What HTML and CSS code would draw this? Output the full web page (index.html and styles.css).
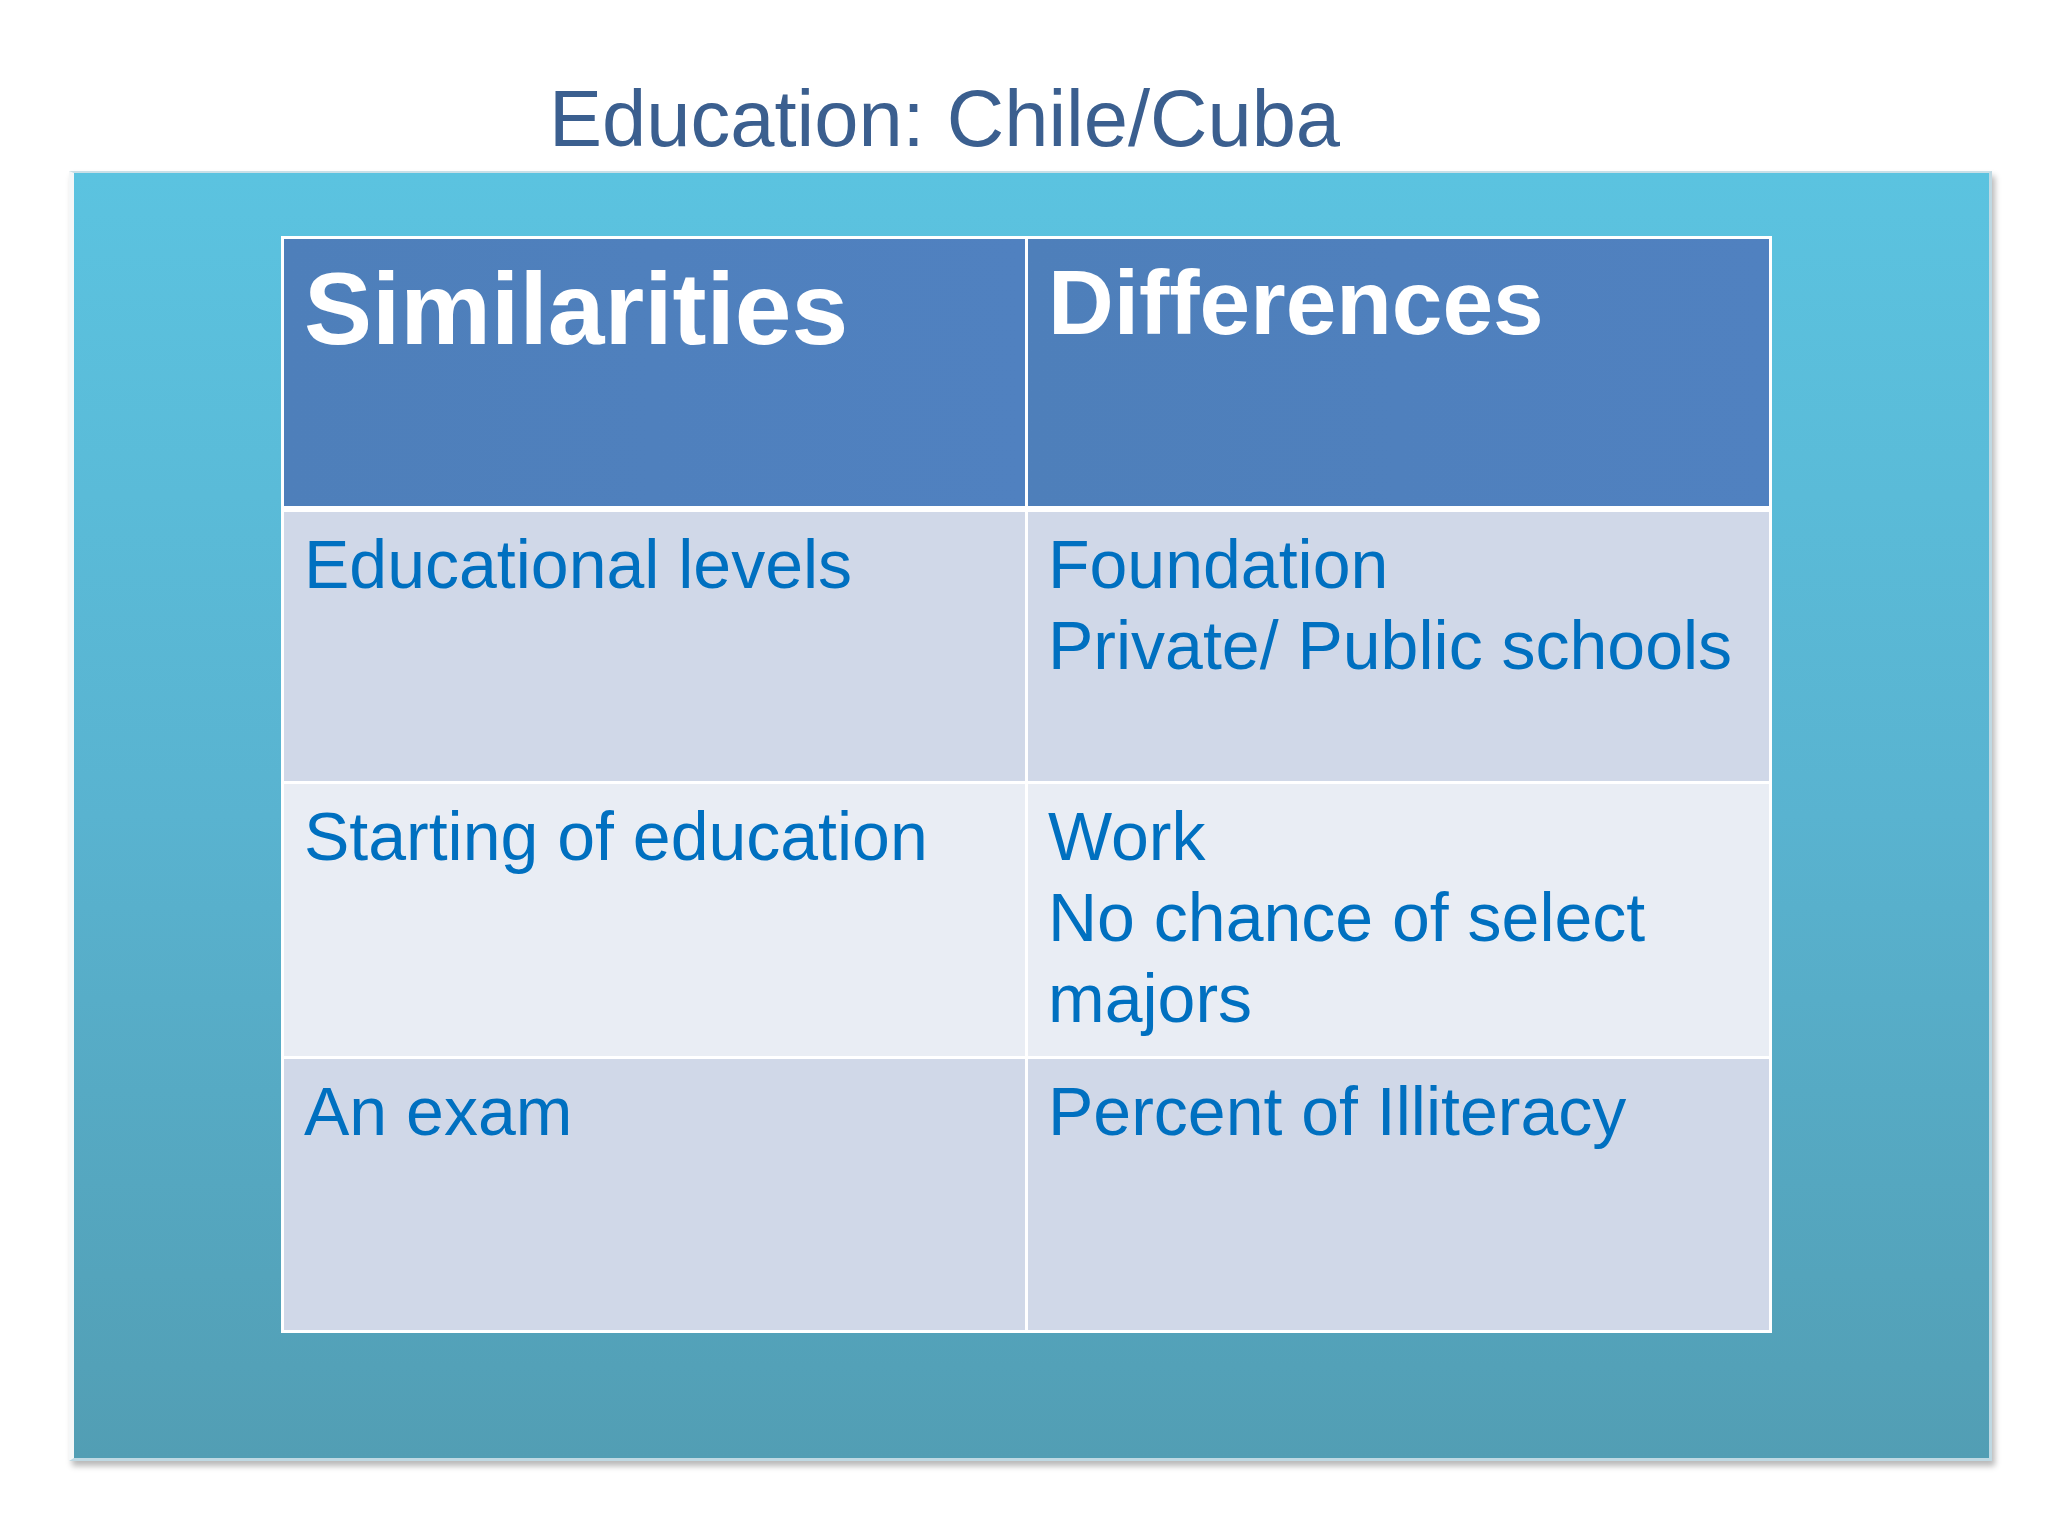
FILE: index.html
```html
<!DOCTYPE html>
<html>
<head>
<meta charset="utf-8">
<link rel="stylesheet" href="styles.css">
</head>
<body>
<div class="slide">
  <h1 class="title">Education: Chile/Cuba</h1>
  <div class="panel">
    <div class="grid">
      <div class="cell head"><span class="h-big">Similarities</span></div>
      <div class="cell head"><span class="h-mid">Differences</span></div>
      <div class="cell odd">Educational levels</div>
      <div class="cell odd">Foundation<br>Private/ Public schools</div>
      <div class="cell even">Starting of education</div>
      <div class="cell even">Work<br>No chance of select majors</div>
      <div class="cell odd">An exam</div>
      <div class="cell odd">Percent of Illiteracy</div>
    </div>
  </div>
</div>
</body>
</html>
```

FILE: styles.css
```css
html, body {
  margin: 0;
  padding: 0;
  background: #ffffff;
}
.slide {
  width: 2048px;
  height: 1536px;
  display: flex;
  flex-direction: column;
  font-family: "Liberation Sans", Arial, sans-serif;
}
.title {
  margin: 73px 0 0 549px;
  font-size: 79.5px;
  font-weight: normal;
  line-height: 92px;
  height: 92px;
  color: #3b5f8f;
  white-space: nowrap;
}
.panel {
  margin: 6px 0 0 69px;
  border-left: 5px solid #f5f7f8;
  border-top: 2px solid #c9dfe7;
  border-right: 3px solid #bfd9e3;
  border-bottom: 3px solid #bfd9e3;
  background: linear-gradient(to bottom, #5bc3e0 0%, #59b3d0 50%, #529eb4 100%);
  box-shadow: 3px 5px 6px rgba(0, 0, 0, 0.28);
  display: flex;
  align-items: flex-start;
  padding: 63px 0 0 207px;
  box-sizing: border-box;
  width: 1923px;
  height: 1290px;
}
.grid {
  display: grid;
  grid-template-columns: 741px 741px;
  grid-template-rows: 270px 269px 272px 271px;
  gap: 3px;
  padding: 3px;
  background: #ffffff;
}
.cell {
  box-sizing: border-box;
  padding: 12px 8px 0 20px;
  font-size: 68px;
  line-height: 81px;
  color: #0070c0;
  white-space: normal;
}
.head {
  background: linear-gradient(to right, #4e7fba, #5081c0);
  color: #ffffff;
  font-weight: bold;
  padding-top: 10px;
  border-bottom: 3px solid #ffffff;
}
.h-big {
  font-size: 102px;
  line-height: 121px;
}
.h-mid {
  font-size: 91px;
  line-height: 107px;
}
.odd {
  background: #d0d8e8;
}
.even {
  background: #e9edf4;
}
```
